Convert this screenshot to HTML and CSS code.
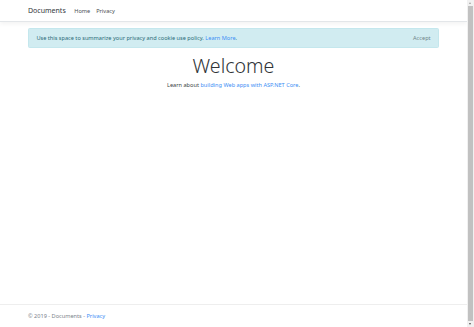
FILE: index.html
```html
<!DOCTYPE html>
<html lang="en">
<head>
    <meta charset="UTF-8">
    <meta name="viewport" content="width=device-width, initial-scale=1.0">
    <title>Home Page - Documents</title>
    <link rel="stylesheet" href="styles.css">
</head>
<body>
    <header>
        <nav class="navbar">
            <div class="container navbar-inner">
                <a class="navbar-brand" href="#">Documents</a>
                <ul class="navbar-nav">
                    <li><a class="nav-link" href="#">Home</a></li>
                    <li><a class="nav-link" href="#">Privacy</a></li>
                </ul>
            </div>
        </nav>
    </header>

    <div class="container">
        <div class="alert">
            Use this space to summarize your privacy and cookie use policy. <a href="#">Learn More</a>.
            <button type="button" class="accept-policy">Accept</button>
        </div>

        <main class="main">
            <div class="text-center">
                <h1 class="display-4">Welcome</h1>
                <p>Learn about <a href="#">building Web apps with ASP.NET Core</a>.</p>
            </div>
        </main>
    </div>

    <footer class="footer">
        <div class="container">
            &copy; 2019 - Documents - <a href="#">Privacy</a>
        </div>
    </footer>

    <!-- browser scrollbar of the zoomed-out window -->
    <div class="scrollbar">
        <div class="scroll-arrow up"></div>
        <div class="scroll-thumb"></div>
        <div class="scroll-arrow down"></div>
    </div>
</body>
</html>
```

FILE: styles.css
```css
* {
    box-sizing: border-box;
}

html {
    position: relative;
    min-height: 100%;
}

body {
    font-family: "Noto Sans", "Open Sans", sans-serif;
    font-size: 5.6px;
    line-height: 1.5;
    color: #3a3f44;
    background-color: #ffffff;
    margin: 0 7px 24px 0;
}

a {
    color: #3d8ef5;
    text-decoration: none;
}

.container {
    width: 422px;
    margin: 0 auto;
    padding: 0 5.5px;
}

/* Navbar */
.navbar {
    background-color: #ffffff;
    border-bottom: 1px solid #e3e6e9;
    box-shadow: 0 1.5px 4.5px rgba(0, 0, 0, 0.05);
    margin-bottom: 6px;
}

.navbar-inner {
    display: flex;
    align-items: center;
    height: 21px;
    padding-top: 1px;
}

.navbar-brand {
    color: #33373b;
    font-size: 7px;
    margin-right: 5.5px;
}

.navbar-nav {
    display: flex;
    list-style: none;
    margin: 0;
    padding: 0;
}

.nav-link {
    display: block;
    color: #4a4f54;
    padding: 0 3px;
}

/* Cookie alert */
.alert {
    position: relative;
    background-color: #d1ecf1;
    border: 1px solid #c4e7ed;
    border-radius: 1.5px;
    color: #2a6b78;
    padding: 4.6px 23px 4.6px 7.4px;
    margin-bottom: 6px;
}

.alert a {
    color: #3d8ef5;
}

.accept-policy {
    position: absolute;
    top: 0;
    right: 0;
    padding: 4.6px 7.4px;
    background: transparent;
    border: 0;
    font-family: inherit;
    font-size: 5.6px;
    line-height: inherit;
    color: #6f8489;
}

/* Main */
.main {
    padding-bottom: 6px;
}

.text-center {
    text-align: center;
}

.display-4 {
    font-size: 19.6px;
    font-weight: 300;
    line-height: 1.25;
    color: #303438;
    margin: 0 0 3px;
}

.text-center p {
    margin: 0;
}

/* Footer */
.footer {
    position: absolute;
    bottom: 0;
    left: 0;
    right: 7px;
    border-top: 1px solid #eeeeee;
    color: #7b838a;
    line-height: 22px;
    white-space: nowrap;
}

/* Scrollbar */
.scrollbar {
    position: fixed;
    top: 0;
    right: 0;
    bottom: 0;
    width: 7px;
    background-color: #f1f1f1;
    display: flex;
    flex-direction: column;
}

.scroll-arrow {
    height: 6px;
    position: relative;
}

.scroll-arrow::after {
    content: "";
    position: absolute;
    left: 2px;
    border-left: 1.5px solid transparent;
    border-right: 1.5px solid transparent;
}

.scroll-arrow.up::after {
    top: 2px;
    border-bottom: 2px solid #a3a3a3;
}

.scroll-arrow.down::after {
    bottom: 2px;
    border-top: 2px solid #505050;
}

.scroll-thumb {
    flex: 1;
    margin: 0 1px;
    background-color: #c1c1c1;
}
```
